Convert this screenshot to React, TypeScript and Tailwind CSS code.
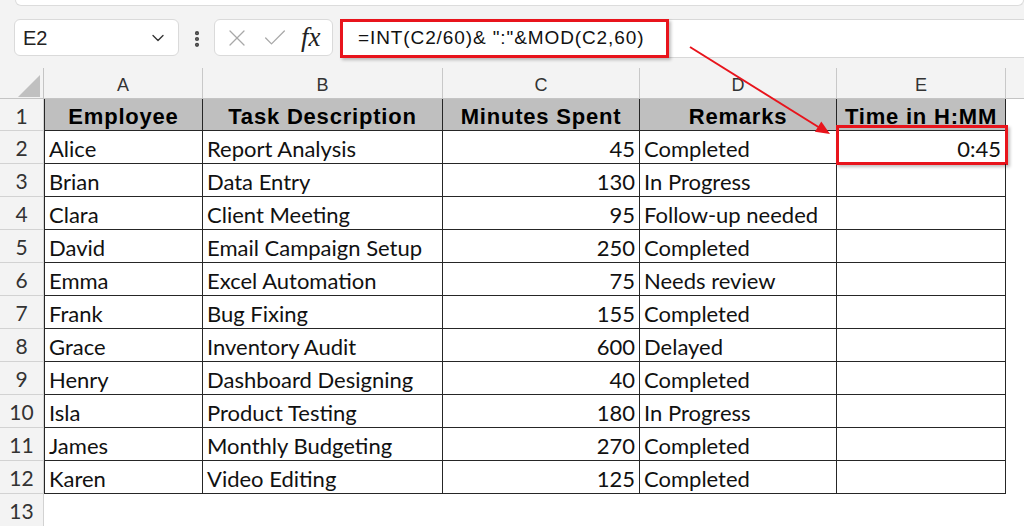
import React from "react";
import { Check, ChevronDown, EllipsisVertical, X } from "lucide-react";

const rows = [
  ["Alice", "Report Analysis", "45", "Completed", "0:45"],
  ["Brian", "Data Entry", "130", "In Progress", ""],
  ["Clara", "Client Meeting", "95", "Follow-up needed", ""],
  ["David", "Email Campaign Setup", "250", "Completed", ""],
  ["Emma", "Excel Automation", "75", "Needs review", ""],
  ["Frank", "Bug Fixing", "155", "Completed", ""],
  ["Grace", "Inventory Audit", "600", "Delayed", ""],
  ["Henry", "Dashboard Designing", "40", "Completed", ""],
  ["Isla", "Product Testing", "180", "In Progress", ""],
  ["James", "Monthly Budgeting", "270", "Completed", ""],
  ["Karen", "Video Editing", "125", "Completed", ""],
];

const cols = [
  { letter: "A", w: "w-[159px]" },
  { letter: "B", w: "w-[240px]" },
  { letter: "C", w: "w-[197px]" },
  { letter: "D", w: "w-[197px]" },
  { letter: "E", w: "w-[169px]" },
];

const headers = ["Employee", "Task Description", "Minutes Spent", "Remarks", "Time in H:MM"];

const cellFont = { fontFamily: "Lato, 'Noto Sans', sans-serif" };

function RowNum({ n, h }: { n: number; h: string }) {
  return (
    <div
      className={`${h} w-[44px] shrink-0 flex items-center justify-center pt-[2px] bg-[#f3f3f3] border-b border-r border-[#d2d2d2] text-[21px] text-[#333]`}
      style={cellFont}
    >
      {n}
    </div>
  );
}

export default function App() {
  return (
    <div className="relative w-[1024px] h-[526px] overflow-hidden bg-[#f3f3f3]" style={{ fontFamily: "'Liberation Sans', Arial, sans-serif" }}>
      {/* ribbon edge */}
      <div className="h-[6px] ml-[15px] bg-white rounded-b-[10px] border border-t-0 border-[#dcdcdc]" />

      {/* formula bar */}
      <div className="mt-[13px] h-[39px] flex items-stretch">
        <div className="ml-[14px] w-[165px] h-[37px] bg-white rounded-[6px] border border-[#dadada] flex items-center justify-between pl-[8px] pr-[10px]">
          <span className="text-[20px] text-[#222]">E2</span>
          <ChevronDown size={20} strokeWidth={1.6} className="text-[#333]" />
        </div>
        <div className="w-[35px] flex items-center justify-center">
          <EllipsisVertical size={20} strokeWidth={3} className="text-[#444]" />
        </div>
        <div className="w-[119px] h-[37px] bg-white rounded-[6px] border border-[#dadada] flex items-center pl-[8px] gap-[6px]">
          <X size={28} strokeWidth={1.1} className="text-[#a8a8a8]" />
          <Check size={28} strokeWidth={1.1} className="text-[#a8a8a8] ml-[4px]" />
          <span className="ml-[6px] text-[27px] italic text-[#222]" style={{ fontFamily: "'Liberation Serif', serif" }}>
            fx
          </span>
        </div>
        <div className="ml-[7px] flex-1 h-[39px] bg-white border-y border-[#d8d8d8] flex">
          <div className="w-[329px] h-[39px] -mt-[1px] border-[3px] border-[#e8141c] flex items-center pl-[15px] shadow-[2px_2px_3px_rgba(0,0,0,0.25)]">
            <span className="text-[19px] tracking-[0.9px] text-[#111]">=INT(C2/60)&amp; ":"&amp;MOD(C2,60)</span>
          </div>
        </div>
      </div>

      {/* column headers */}
      <div className="mt-[10px] h-[31px] flex border-b border-[#c4c4c4]">
        <div className="w-[44px] shrink-0 relative border-r border-[#c4c4c4]">
          <svg className="absolute left-[18px] top-[7px]" width="22" height="22" viewBox="0 0 22 22">
            <polygon points="22,0 22,22 0,22" fill="#c0c0c0" />
          </svg>
        </div>
        {cols.map((c) => (
          <div key={c.letter} className={`${c.w} shrink-0 flex items-center justify-center pt-[4px] border-r border-[#c8c8c8] text-[18px] text-[#333]`}>
            {c.letter}
          </div>
        ))}
        <div className="flex-1" />
      </div>

      {/* row 1 headers */}
      <div className="flex bg-white">
        <RowNum n={1} h="h-[32px]" />
        {headers.map((t, i) => (
          <div
            key={t}
            className={`${cols[i].w} h-[32px] shrink-0 flex items-center justify-center pt-[3px] bg-[#bfbfbf] border-b border-r border-[#262626] ${i === 0 ? "border-l" : ""} text-[22px] font-bold tracking-[0.8px] text-black`}
          >
            {t}
          </div>
        ))}
        <div className="flex-1" />
      </div>

      {/* data rows */}
      {rows.map((r, ri) => (
        <div key={r[0]} className="flex bg-white">
          <RowNum n={ri + 2} h="h-[33px]" />
          {r.map((v, ci) => (
            <div
              key={ci}
              className={`${cols[ci].w} h-[33px] shrink-0 flex items-center pt-[2px] border-b border-r border-[#262626] ${ci === 0 ? "border-l" : ""} ${ci === 2 || ci === 4 ? "justify-end pr-[4px]" : "pl-[4px]"} text-[22px] text-[#111] ${ci === 4 ? "relative" : ""}`}
              style={cellFont}
            >
              {v}
              {ri === 0 && ci === 4 && (
                <div className="absolute -top-[6px] -left-[1px] -right-[3px] -bottom-[2px] border-[3px] border-[#e8141c] shadow-[2px_2px_3px_rgba(0,0,0,0.25)]" />
              )}
            </div>
          ))}
          <div className="flex-1" />
        </div>
      ))}

      {/* row 13 */}
      <div className="flex bg-white">
        <RowNum n={13} h="h-[33px]" />
        <div className="flex-1" />
      </div>

      {/* arrow */}
      <svg className="absolute inset-0 pointer-events-none" width="1024" height="526">
        <line x1="690" y1="47" x2="820" y2="128" stroke="#e8141c" strokeWidth="2" />
        <polygon points="830,134 814.9,131.7 821.3,121.5" fill="#e8141c" />
      </svg>
    </div>
  );
}
